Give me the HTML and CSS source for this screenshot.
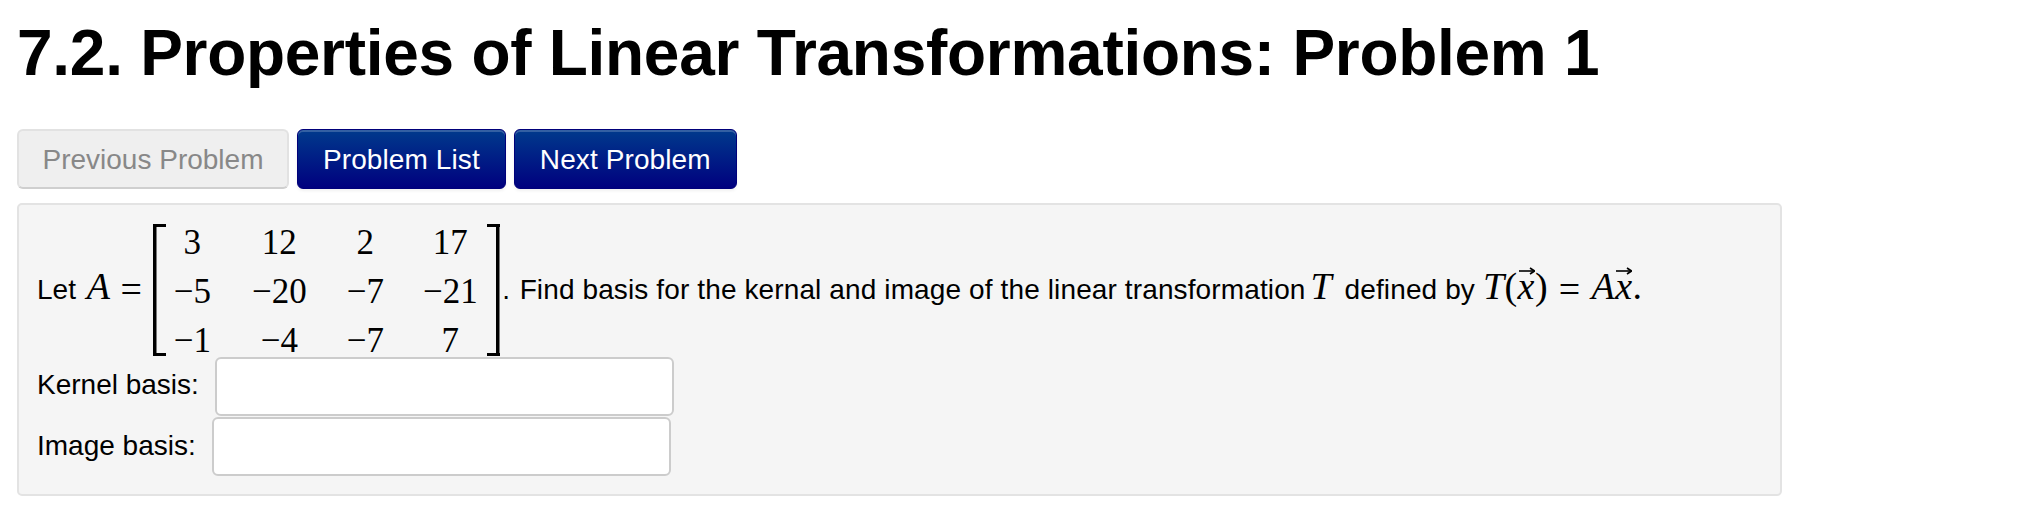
FILE: index.html
```html
<!DOCTYPE html>
<html lang="en">
<head>
<meta charset="utf-8">
<title>7.2. Properties of Linear Transformations: Problem 1</title>
<link rel="stylesheet" href="styles.css">
</head>
<body>
<h1 class="title">7.2. Properties of Linear Transformations: Problem 1</h1>
<nav class="nav">
  <a class="btn btn-disabled">Previous Problem</a>
  <a class="btn btn-primary">Problem List</a>
  <a class="btn btn-primary">Next Problem</a>
</nav>
<section class="panel">
  <div class="statement"><span>Let </span><span class="math math-lead"><i>A</i> <span class="eq">=</span></span><div class="matrix">
      <span>3</span><span>12</span><span>2</span><span>17</span>
      <span>−5</span><span>−20</span><span>−7</span><span>−21</span>
      <span>−1</span><span>−4</span><span>−7</span><span>7</span>
    </div><span class="after">.</span><span class="prose">Find basis for the kernal and image of the linear transformation </span><span class="math math-t"><i>T</i></span><span class="prose defined">defined by</span><span class="math math-final"><i>T</i>(<span class="vec"><i>x</i><svg class="arrow" viewBox="0 0 16 8" aria-hidden="true"><path d="M0 4H14.5"/><path d="M11 1L15.5 4L11 7"/></svg></span>) <span class="eq">=</span> <i>A</i><span class="vec"><i>x</i><svg class="arrow" viewBox="0 0 16 8" aria-hidden="true"><path d="M0 4H14.5"/><path d="M11 1L15.5 4L11 7"/></svg></span>.</span></div>
  <div class="field">
    <label class="field-label" for="kernel">Kernel basis:</label>
    <input class="field-input" id="kernel" type="text">
  </div>
  <div class="field">
    <label class="field-label" for="image">Image basis:</label>
    <input class="field-input" id="image" type="text">
  </div>
</section>
</body>
</html>
```
FILE: styles.css
```css
* { box-sizing: border-box; }
html, body { margin: 0; background: #fff; }
body {
  padding: 0 17px;
  font-family: "Liberation Sans", Arial, sans-serif;
  font-size: 28px;
  color: #000;
  height: 510px;
  overflow: hidden;
}
.title {
  margin: 0;
  padding-top: 18px;
  font-size: 64px;
  line-height: 71px;
  font-weight: 700;
  letter-spacing: -0.28px;
  height: 129px;
}
.nav { display: flex; gap: 8px; height: 60px; }
.btn {
  display: flex;
  align-items: center;
  justify-content: center;
  border-radius: 6px;
  font-size: 28px;
  height: 60px;
  padding-top: 1px;
}
.btn-disabled {
  width: 272px;
  background: #efefef;
  border: 2px solid #e2e2e2;
  border-bottom-color: #cfcfcf;
  color: #888;
}
.btn-primary {
  padding-left: 25px;
  padding-right: 25px;
  letter-spacing: 0.1px;
  color: #fff;
  background: linear-gradient(#003a8c, #00007f);
  border: 1px solid #00007a;
  box-shadow: inset 0 2px 0 rgba(255,255,255,.2), 0 2px 3px rgba(0,0,0,.06);
}
.panel {
  width: 1765px;
  height: 293px;
  margin-top: 14px;
  padding: 23px 18px 0;
  background: #f5f5f5;
  border: 2px solid #e3e3e3;
  border-radius: 5px;
}
.statement { height: 128px; white-space: pre; }
.math { font-family: "Liberation Serif", "Times New Roman", serif; font-size: 38px; white-space: pre; }
.math-lead { margin-left: 3px; }
.math-t { margin-left: -3px; }
.math-final { margin-left: 8px; letter-spacing: 0.4px; }
.eq { margin: 0 1px; vertical-align: -3px; }
.prose { letter-spacing: 0.12px; }
.defined { margin-left: 13px; }
.after { margin: 0 9.5px 0 2.5px; }
.vec { position: relative; display: inline-block; }
.arrow {
  position: absolute;
  left: 1px;
  top: 3px;
  width: 16px;
  height: 8px;
  fill: none;
  stroke: #000;
  stroke-width: 1.6;
}
.matrix {
  display: inline-grid;
  vertical-align: middle;
  grid-template-columns: 87px 87px 85px 85px;
  grid-auto-rows: 49px;
  align-content: center;
  justify-content: center;
  align-items: center;
  justify-items: center;
  width: 347px;
  height: 132px;
  margin: -4px 0 0 10px;
  padding: 4px 11px 0 0;
  line-height: 1.15;
  font-family: "Liberation Serif", "Times New Roman", serif;
  font-size: 35px;
  background:
    linear-gradient(#000, #000) left / 3.5px 100% no-repeat,
    linear-gradient(#000, #000) left top / 13px 3px no-repeat,
    linear-gradient(#000, #000) left bottom / 13px 3px no-repeat,
    linear-gradient(#000, #000) right / 3.5px 100% no-repeat,
    linear-gradient(#000, #000) right top / 13px 3px no-repeat,
    linear-gradient(#000, #000) right bottom / 13px 3px no-repeat;
}
.field { display: flex; align-items: center; gap: 16px; height: 60.5px; }
.field-label { margin-bottom: 2px; }
.field-input {
  width: 459px;
  height: 59px;
  background: #fff;
  border: 2px solid #ccc;
  border-radius: 6px;
}
```
